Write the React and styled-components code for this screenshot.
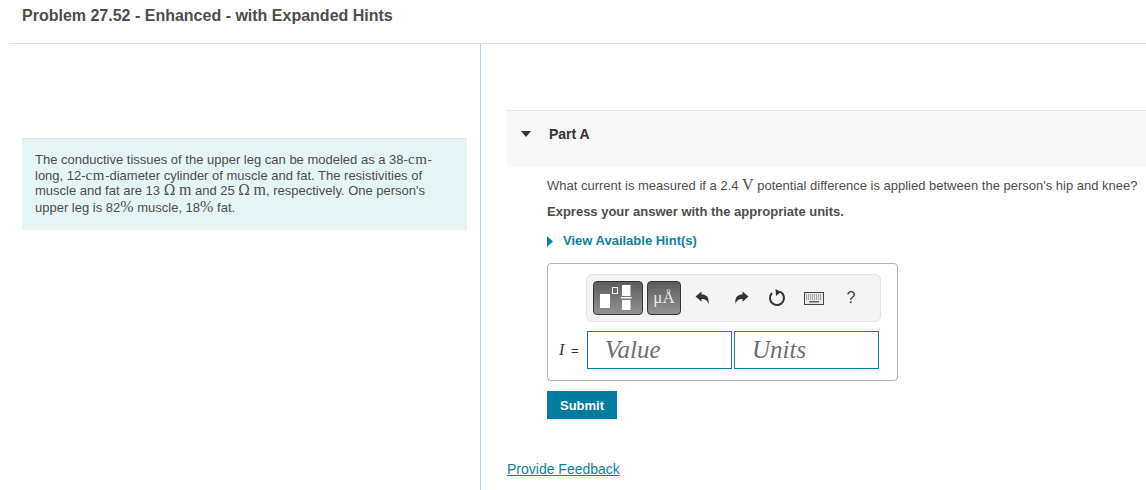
import styled, { createGlobalStyle } from "styled-components";

const GlobalStyle = createGlobalStyle`
  html, body {
    margin: 0;
    padding: 0;
    background: #fff;
    overflow: hidden;
  }
  body {
    font-family: "Liberation Sans", Arial, sans-serif;
    color: #4d4d4d;
  }
`;

const Page = styled.div`
  width: 1146px;
  height: 490px;
  overflow: hidden;
`;

const Header = styled.div`
  height: 44px;
  margin-left: 9px;
  padding: 6px 0 0 13px;
  box-sizing: border-box;
  border-bottom: 1px solid #dfe3e6;
`;

const Title = styled.h1`
  margin: 0;
  font-size: 16px;
  line-height: 20px;
  font-weight: 700;
  color: #4d4d4d;
`;

const Columns = styled.div`
  display: flex;
  height: 446px;
`;

const LeftColumn = styled.div`
  width: 472px;
  margin-left: 9px;
  box-sizing: border-box;
  padding: 94px 13px 0 13px;
  border-right: 1px solid #b5d0e6;
`;

const Intro = styled.div`
  box-sizing: border-box;
  height: 92px;
  padding: 13px 13px 0;
  background: #e5f5f6;
  border-top: 1px solid #e2e6e6;
  font-size: 13px;
  color: #4d4d4d;
  white-space: nowrap;
`;

const IntroLine = styled.div`
  height: ${(p) => p.$height || 15.5}px;
  line-height: 15px;
`;

const Tex = styled.span`
  font-family: ${(p) => (p.$omega ? '"DejaVu Serif"' : '"Liberation Serif"')}, serif;
  font-size: ${(p) => p.$size || 15}px;
  letter-spacing: ${(p) => p.$spacing || 0}px;
  line-height: 0;
`;

const RightColumn = styled.div`
  flex: 1;
  min-width: 0;
  padding: 66px 0 0 26px;
`;

const PartHeader = styled.div`
  display: flex;
  height: 57px;
  box-sizing: border-box;
  padding: 15px 0 0 14px;
  background: #f8f8f8;
  border-top: 1px solid #e2e2e2;
`;

const Caret = styled.svg`
  display: block;
  flex: none;
`;

const PartTitle = styled.div`
  margin-left: 18px;
  font-size: 14px;
  line-height: 16px;
  font-weight: 700;
  color: #333;
`;

const PartBody = styled.div`
  padding: 9px 0 0 40px;
`;

const Question = styled.div`
  font-size: 13px;
  line-height: 20px;
  color: #4d4d4d;
  white-space: nowrap;
`;

const Instruction = styled.div`
  margin-top: 8px;
  font-size: 13px;
  line-height: 16px;
  font-weight: 700;
  color: #4d4d4d;
`;

const HintToggle = styled.div`
  display: flex;
  align-items: center;
  gap: 10px;
  margin-top: 13px;
  font-size: 13px;
  line-height: 16px;
  font-weight: 700;
  color: #0d7f9f;
`;

const AnswerBox = styled.div`
  box-sizing: border-box;
  width: 351px;
  height: 118px;
  margin-top: 14px;
  padding: 10px 0 0 11px;
  border: 1px solid #b3b3b3;
  border-radius: 4px;
`;

const Toolbar = styled.div`
  box-sizing: border-box;
  display: flex;
  align-items: center;
  width: 295px;
  height: 48px;
  margin-left: 27px;
  padding-left: 6px;
  background: #f4f4f4;
  border: 1px solid #e2e2e2;
  border-radius: 6px;
`;

const TemplateButton = styled.div`
  box-sizing: border-box;
  display: flex;
  align-items: center;
  justify-content: center;
  width: ${(p) => p.$width}px;
  height: 34px;
  margin-right: 4px;
  background: linear-gradient(#5c5c5c, #929292);
  border: 1px solid #333;
  border-radius: 4px;
  color: #e8e8e8;
  font-family: "Liberation Serif", serif;
  font-size: 17px;
`;

const ToolIcon = styled.div`
  display: flex;
  align-items: center;
  justify-content: center;
  width: ${(p) => p.$width}px;
  font-size: 16px;
  color: #444;
`;

const InputRow = styled.div`
  display: flex;
  align-items: center;
  margin-top: 9px;
`;

const VarLabel = styled.div`
  width: 28px;
  font-size: 13px;
  color: #333;
  white-space: nowrap;

  i {
    margin-right: 3px;
    font-family: "Liberation Serif", serif;
    font-size: 16px;
  }
`;

const AnswerField = styled.div`
  box-sizing: border-box;
  width: 145px;
  height: 38px;
  margin-right: 2px;
  padding-left: 17px;
  border: 1px solid #0d7f9f;
  font-family: "Liberation Serif", serif;
  font-style: italic;
  font-size: 25px;
  line-height: 36px;
  color: #6f6f6f;
`;

const SubmitButton = styled.button`
  display: block;
  width: 70px;
  height: 28px;
  margin-top: 10px;
  padding: 0;
  border: 0;
  background: #007c9f;
  color: #fff;
  font-family: inherit;
  font-size: 13px;
  font-weight: 700;
`;

const FeedbackLink = styled.a`
  display: block;
  margin-top: 41px;
  font-size: 14px;
  line-height: 18px;
  color: #0d7f9f;
  text-decoration: underline;
`;

function TemplateIcon() {
  return (
    <svg width="38" height="26" viewBox="0 0 38 26">
      <rect x="1" y="9" width="10" height="14" fill="#fff" />
      <rect x="13.5" y="2.5" width="5" height="6" fill="none" stroke="#eee" strokeWidth="1" />
      <rect x="23" y="0" width="8.5" height="11" fill="#fff" />
      <rect x="22" y="12" width="10.5" height="1.5" fill="#fff" />
      <rect x="23" y="15" width="8.5" height="10" fill="#fff" />
    </svg>
  );
}

function UndoIcon({ flip }) {
  return (
    <svg width="15" height="14" viewBox="0 0 15 14" style={flip ? { transform: "scaleX(-1)" } : undefined}>
      <path d="M0.5 5.5 L6.5 0.5 V3.6 C11 3.6 14.5 6 13.5 13 C12.5 9.5 10.5 8 6.5 8 V10.8 Z" fill="#333" />
    </svg>
  );
}

function RefreshIcon() {
  return (
    <svg width="18" height="20" viewBox="0 0 18 20">
      <path d="M4.05 5.05 A7 7 0 1 0 12 3.7" fill="none" stroke="#333" strokeWidth="2" />
      <path d="M7.5 1 L13 4 L8 8 Z" fill="#333" />
    </svg>
  );
}

function KeyboardIcon() {
  return (
    <svg width="20" height="13" viewBox="0 0 20 13">
      <rect x="0.5" y="0.5" width="19" height="12" fill="#e8e8e8" stroke="#444" />
      <path d="M2 3 H18 M2 5 H18 M2 7 H18" stroke="#666" strokeDasharray="1 1" />
      <rect x="5" y="9" width="10" height="1.5" fill="#666" />
    </svg>
  );
}

export default function App() {
  return (
    <Page>
      <GlobalStyle />
      <Header>
        <Title>Problem 27.52 - Enhanced - with Expanded Hints</Title>
      </Header>
      <Columns>
        <LeftColumn>
          <Intro>
            <IntroLine>
              The conductive tissues of the upper leg can be modeled as a 38-<Tex $spacing={0.6}>cm</Tex>-
            </IntroLine>
            <IntroLine>
              long, 12-<Tex $spacing={0.6}>cm</Tex>-diameter cylinder of muscle and fat. The resistivities of
            </IntroLine>
            <IntroLine $height={17}>
              muscle and fat are 13 <Tex $omega $size={14}>Ω</Tex> <Tex $size={16}>m</Tex> and 25 <Tex $omega $size={14}>Ω</Tex> <Tex $size={16}>m</Tex>, respectively. One person's
            </IntroLine>
            <IntroLine>
              upper leg is 82<Tex $size={16}>%</Tex> muscle, 18<Tex $size={16}>%</Tex> fat.
            </IntroLine>
          </Intro>
        </LeftColumn>
        <RightColumn>
          <PartHeader>
            <Caret width="10" height="6" viewBox="0 0 10 6" style={{ marginTop: 5 }}>
              <path d="M0 0 H10 L5 6 Z" fill="#333" />
            </Caret>
            <PartTitle>Part A</PartTitle>
          </PartHeader>
          <PartBody>
            <Question>
              What current is measured if a 2.4 <Tex $size={16}>V</Tex> potential difference is applied between the person's hip and knee?
            </Question>
            <Instruction>Express your answer with the appropriate units.</Instruction>
            <HintToggle>
              <Caret width="6" height="11" viewBox="0 0 6 11">
                <path d="M0 0 L6 5.5 L0 11 Z" fill="#0d7f9f" />
              </Caret>
              View Available Hint(s)
            </HintToggle>
            <AnswerBox>
              <Toolbar>
                <TemplateButton $width={50}>
                  <TemplateIcon />
                </TemplateButton>
                <TemplateButton $width={34}>μÅ</TemplateButton>
                <ToolIcon $width={34}>
                  <UndoIcon />
                </ToolIcon>
                <ToolIcon $width={44}>
                  <UndoIcon flip />
                </ToolIcon>
                <ToolIcon $width={28}>
                  <RefreshIcon />
                </ToolIcon>
                <ToolIcon $width={46}>
                  <KeyboardIcon />
                </ToolIcon>
                <ToolIcon $width={28}>?</ToolIcon>
              </Toolbar>
              <InputRow>
                <VarLabel>
                  <i>I</i> =
                </VarLabel>
                <AnswerField>Value</AnswerField>
                <AnswerField>Units</AnswerField>
              </InputRow>
            </AnswerBox>
            <SubmitButton>Submit</SubmitButton>
          </PartBody>
          <FeedbackLink href="#">Provide Feedback</FeedbackLink>
        </RightColumn>
      </Columns>
    </Page>
  );
}
